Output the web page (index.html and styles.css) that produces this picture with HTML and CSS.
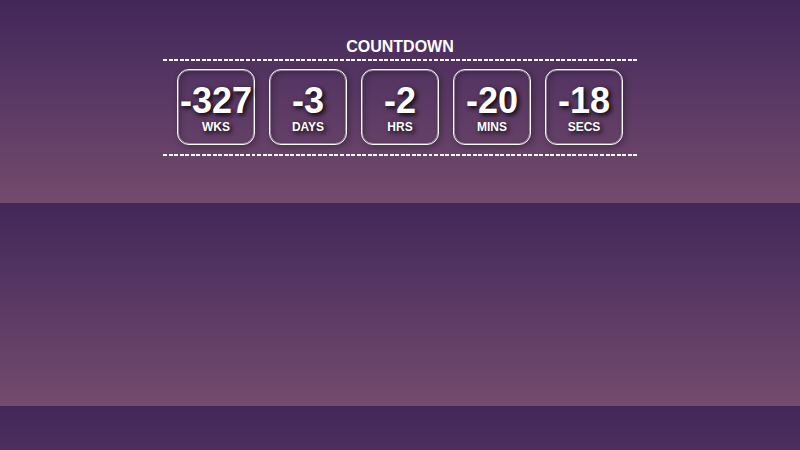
FILE: index.html
```
<!DOCTYPE html>
<html lang="en">
<head>
  <meta charset="utf-8">
  <meta name="viewport" content="width=device-width, initial-scale=1">
  <title>Countdown</title>
  <link rel="stylesheet" href="styles.css">
</head>
<body>
  <main class="countdown">
    <h1 class="title">COUNTDOWN</h1>
    <div class="timer">
      <div class="box">
        <span class="number">-327</span>
        <span class="label">WKS</span>
      </div>
      <div class="box">
        <span class="number">-3</span>
        <span class="label">DAYS</span>
      </div>
      <div class="box">
        <span class="number">-2</span>
        <span class="label">HRS</span>
      </div>
      <div class="box">
        <span class="number">-20</span>
        <span class="label">MINS</span>
      </div>
      <div class="box">
        <span class="number">-18</span>
        <span class="label">SECS</span>
      </div>
    </div>
  </main>
</body>
</html>
```

FILE: styles.css
```
* {
  box-sizing: border-box;
}

/* the gradient repeats below the body */
body {
  margin: 0;
  padding: 36px 0 47px;
  background: linear-gradient(#42275a, #734b6d);
  color: #fff;
  font-family: "Liberation Sans", Arial, sans-serif;
  font-weight: bold;
}

.countdown {
  display: flex;
  flex-direction: column;
  align-items: center;
}

.title {
  margin: 0 0 1px;
  font-size: 16px;
  line-height: 22px;
}

.timer {
  display: flex;
  flex-wrap: wrap;
  justify-content: center;
  gap: 14px;
  padding: 10px 14px 11px;
  /* short dashes above and below the boxes */
  --dashes: repeating-linear-gradient(90deg, #fff 0 0.84%, transparent 0.84% 1.167%);
  background:
    var(--dashes) top left / 100% 2px no-repeat,
    var(--dashes) bottom left / 100% 2px no-repeat;
}

.box {
  display: flex;
  flex-direction: column;
  align-items: center;
  width: 78px;
  padding: 10px 0;
  border: 1px solid #fff;
  border-radius: 12px;
  outline: 1px solid rgba(255, 255, 255, 0.4);
  outline-offset: -2px;
  box-shadow: 2px 2px 6px rgba(0, 0, 0, 0.3), inset 2px 2px 6px rgba(0, 0, 0, 0.3);
  text-shadow: 2px 2px 5px #000;
}

.number {
  font-size: 36px;
  line-height: 41px;
}

.label {
  font-size: 12px;
  line-height: 13px;
}
```
